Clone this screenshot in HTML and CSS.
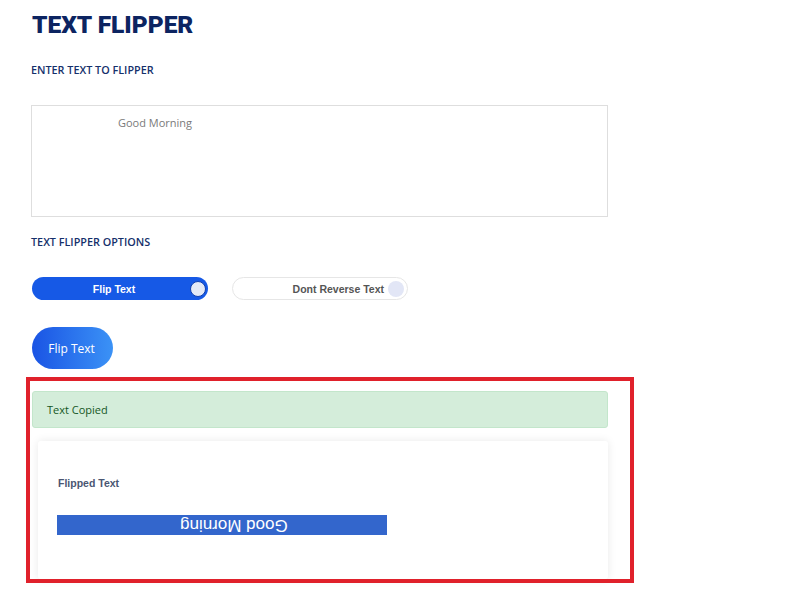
FILE: index.html
```html
<!DOCTYPE html>
<html lang="en">
<head>
<meta charset="utf-8">
<title>Text Flipper</title>
<link rel="stylesheet" href="styles.css">
</head>
<body>
<main class="page">
  <h1 class="title">TEXT FLIPPER</h1>
  <p class="label label-first">ENTER TEXT TO FLIPPER</p>
  <div class="input-box"><span class="placeholder">Good Morning</span></div>
  <p class="label label-options">TEXT FLIPPER OPTIONS</p>
  <div class="toggles">
    <div class="toggle toggle-on"><span class="toggle-text">Flip Text</span><span class="knob"></span></div>
    <div class="toggle toggle-off"><span class="toggle-text">Dont Reverse Text</span><span class="knob"></span></div>
  </div>
  <button class="flip-btn">Flip Text</button>
  <div class="result">
    <div class="alert">Text Copied</div>
    <div class="card">
      <p class="card-title">Flipped Text</p>
      <div class="flipped"><span class="flipped-text">Good Morning</span></div>
    </div>
    <div class="highlight"></div>
  </div>
</main>
</body>
</html>
```

FILE: styles.css
```css
* { box-sizing: border-box; }
html, body { margin: 0; padding: 0; background: #fff; }
body { font-family: "Open Sans", "Liberation Sans", sans-serif; }

.page { padding: 8px 0 30px 32px; width: 608px; }

.title {
  margin: 0;
  font-family: "Roboto", "Liberation Sans", sans-serif;
  font-weight: 900;
  font-size: 24.5px;
  line-height: 34px;
  color: #0c2461;
}

.label {
  margin: 0;
  font-size: 10.8px;
  font-weight: 600;
  color: #15306b;
  line-height: 14px;
  margin-left: -1px;
}
.label-first { margin-top: 21px; }
.label-options { margin-top: 18px; }

.input-box {
  margin-top: 28px;
  margin-left: -1px;
  height: 112px;
  border: 1px solid #dedede;
  padding: 4px 0 0 86px;
}
.placeholder { font-size: 11px; color: #7a7a7a; }

.toggles { display: flex; gap: 24px; margin-top: 28px; }
.toggle {
  position: relative;
  width: 176px;
  height: 23px;
  border-radius: 12px;
  display: flex;
  align-items: center;
  font-family: "Liberation Sans", Arial, sans-serif;
  font-weight: 700;
  font-size: 10.5px;
}
.toggle-on { background: #1659e6; color: #fff; justify-content: center; }
.toggle-on .toggle-text { margin-right: 12px; }
.toggle-off { background: #fff; border: 1px solid #e6e6e6; color: #555; justify-content: flex-end; padding-right: 23px; }
.knob {
  position: absolute;
  right: 4px;
  top: 50%;
  width: 16px;
  height: 16px;
  margin-top: -8px;
  border-radius: 50%;
}
.toggle-on .knob { background: #e3e9f7; border: 1px solid #0f3fb0; right: 2px; }
.toggle-off .knob { background: #e2e6f6; right: 3px; }

.flip-btn {
  display: block;
  margin-top: 27px;
  width: 81px;
  height: 42px;
  border: 0;
  border-radius: 21px;
  background: linear-gradient(90deg, #1a54e4 0%, #3b92f6 100%);
  color: #fff;
  font-family: "Open Sans", sans-serif;
  font-size: 12px;
  font-weight: 500;
  padding: 0 2px 0 0;
}

.result { position: relative; margin-top: 22px; }
.alert {
  height: 37px;
  background: #d4edda;
  border: 1px solid #c3e6cb;
  border-radius: 3px;
  color: #155724;
  font-size: 11px;
  padding-left: 14px;
  display: flex;
  align-items: center;
}
.card {
  margin: 13px 0 0 6px;
  height: 138px;
  background: #fff;
  box-shadow: 0 0 10px rgba(0,0,0,0.09);
  border-radius: 3px;
  padding: 35px 0 0 20px;
}
.card-title {
  margin: 0;
  font-family: "Liberation Sans", Arial, sans-serif;
  font-weight: 700;
  font-size: 10.5px;
  color: #4a5672;
  line-height: 14px;
}
.flipped {
  margin-top: 25px;
  margin-left: -1px;
  width: 330px;
  height: 20px;
  background: #3366cc;
  display: flex;
  justify-content: center;
  align-items: center;
  padding-left: 24px;
  overflow: hidden;
}
.flipped-text {
  display: inline-block;
  transform: rotate(180deg);
  color: #fff;
  font-family: "Liberation Sans", Arial, sans-serif;
  font-size: 17px;
  line-height: 18px;
}

.highlight {
  position: absolute;
  left: -6px;
  top: -14px;
  width: 608px;
  height: 206px;
  border: 4px solid #e0212b;
  pointer-events: none;
}
```
